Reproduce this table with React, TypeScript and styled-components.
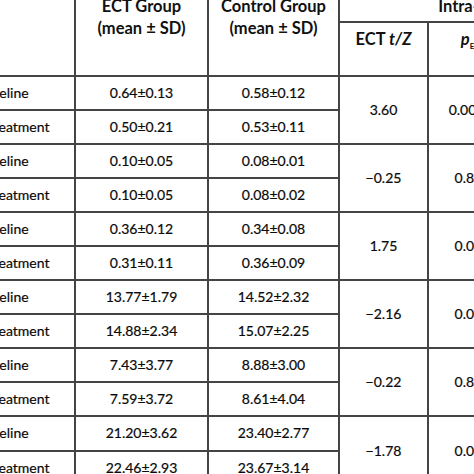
import React from "react";
import styled, { createGlobalStyle } from "styled-components";

const GlobalStyle = createGlobalStyle`
  html, body {
    margin: 0;
    padding: 0;
    background: #ffffff;
  }
  body {
    font-family: Lato, "Open Sans", "Noto Sans", sans-serif;
    color: #111;
  }
`;

const Viewport = styled.div`
  width: 474px;
  height: 474px;
  overflow: hidden;
  background: #ffffff;
`;

const widths = [100, 144, 133, 131, 89, 89, 98, 98];
const total = widths.reduce((a, b) => a + b, 0) + 2;

const Table = styled.table`
  border-collapse: collapse;
  table-layout: fixed;
  width: ${total}px;
  min-width: ${total}px;
  margin-left: -170px;
  margin-top: -12px;
  font-family: Lato, "Open Sans", "Noto Sans", sans-serif;
  color: #111;
`;

const HeadCell = styled.th`
  border: 2px solid #444;
  padding: 4.5px 2px 0;
  vertical-align: top;
  text-align: center;
  font-size: 16.5px;
  font-weight: 700;
  line-height: 22.5px;
  white-space: nowrap;
  overflow: hidden;
`;

const HeadRow = styled.tr<{ $h: number }>`
  height: ${(p) => p.$h}px;
`;

const BodyRow = styled.tr`
  height: 34.05px;
`;

const Cell = styled.td`
  border: 2px solid #444;
  padding: 0 4px;
  vertical-align: middle;
  text-align: center;
  font-size: 14px;
  line-height: 18px;
  white-space: nowrap;
  color: #0a0a0a;
  -webkit-text-stroke: 0.2px #0a0a0a;
`;

const Em = styled.i`
  font-style: italic;
`;

const Sub = styled.sub`
  font-size: 8px;
  line-height: 0;
`;

type Pair = {
  name: string;
  rows: [string, string][];
  t: string;
  p: string;
  tc: string;
  pc: string;
};

const data: Pair[] = [
  { name: "NE (ng/mL)", rows: [["0.64±0.13", "0.58±0.12"], ["0.50±0.21", "0.53±0.11"]], t: "3.60", p: "0.001**", tc: "1.42", pc: "0.164" },
  { name: "DA (ng/mL)", rows: [["0.10±0.05", "0.08±0.01"], ["0.10±0.05", "0.08±0.02"]], t: "−0.25", p: "0.806", tc: "0.38", pc: "0.706" },
  { name: "5-HT (ng/mL)", rows: [["0.36±0.12", "0.34±0.08"], ["0.31±0.11", "0.36±0.09"]], t: "1.75", p: "0.089", tc: "−1.12", pc: "0.270" },
  { name: "BDNF (ng/mL)", rows: [["13.77±1.79", "14.52±2.32"], ["14.88±2.34", "15.07±2.25"]], t: "−2.16", p: "0.038", tc: "−0.95", pc: "0.348" },
  { name: "HAMD", rows: [["7.43±3.77", "8.88±3.00"], ["7.59±3.72", "8.61±4.04"]], t: "−0.22", p: "0.826", tc: "0.31", pc: "0.758" },
  { name: "MMSE", rows: [["21.20±3.62", "23.40±2.77"], ["22.46±2.93", "23.67±3.14"]], t: "−1.78", p: "0.084", tc: "−0.36", pc: "0.722" },
];

export default function App() {
  return (
    <>
      <GlobalStyle />
      <Viewport>
        <Table>
          <colgroup>
            {widths.map((w, i) => (
              <col key={i} style={{ width: w }} />
            ))}
          </colgroup>
          <thead>
            <HeadRow $h={33}>
              <HeadCell rowSpan={2} colSpan={2}>
                Indicators
              </HeadCell>
              <HeadCell rowSpan={2}>
                ECT Group
                <br />
                (mean ± SD)
              </HeadCell>
              <HeadCell rowSpan={2}>
                Control Group
                <br />
                (mean ± SD)
              </HeadCell>
              <HeadCell colSpan={4}>Intra-group Comparison</HeadCell>
            </HeadRow>
            <HeadRow $h={54}>
              <HeadCell>
                ECT <Em>t/Z</Em>
              </HeadCell>
              <HeadCell>
                <Em>p</Em>
                <Sub>ECT</Sub>
              </HeadCell>
              <HeadCell>
                Control <Em>t/Z</Em>
              </HeadCell>
              <HeadCell>
                <Em>p</Em>
                <Sub>Control</Sub>
              </HeadCell>
            </HeadRow>
          </thead>
          <tbody>
            {data.map((d) =>
              d.rows.map((r, i) => (
                <BodyRow key={d.name + i}>
                  {i === 0 && <Cell rowSpan={2}>{d.name}</Cell>}
                  <Cell>{i === 0 ? "Baseline" : "Post-treatment"}</Cell>
                  <Cell>{r[0]}</Cell>
                  <Cell>{r[1]}</Cell>
                  {i === 0 && (
                    <>
                      <Cell rowSpan={2}>{d.t}</Cell>
                      <Cell rowSpan={2}>{d.p}</Cell>
                      <Cell rowSpan={2}>{d.tc}</Cell>
                      <Cell rowSpan={2}>{d.pc}</Cell>
                    </>
                  )}
                </BodyRow>
              ))
            )}
          </tbody>
        </Table>
      </Viewport>
    </>
  );
}
